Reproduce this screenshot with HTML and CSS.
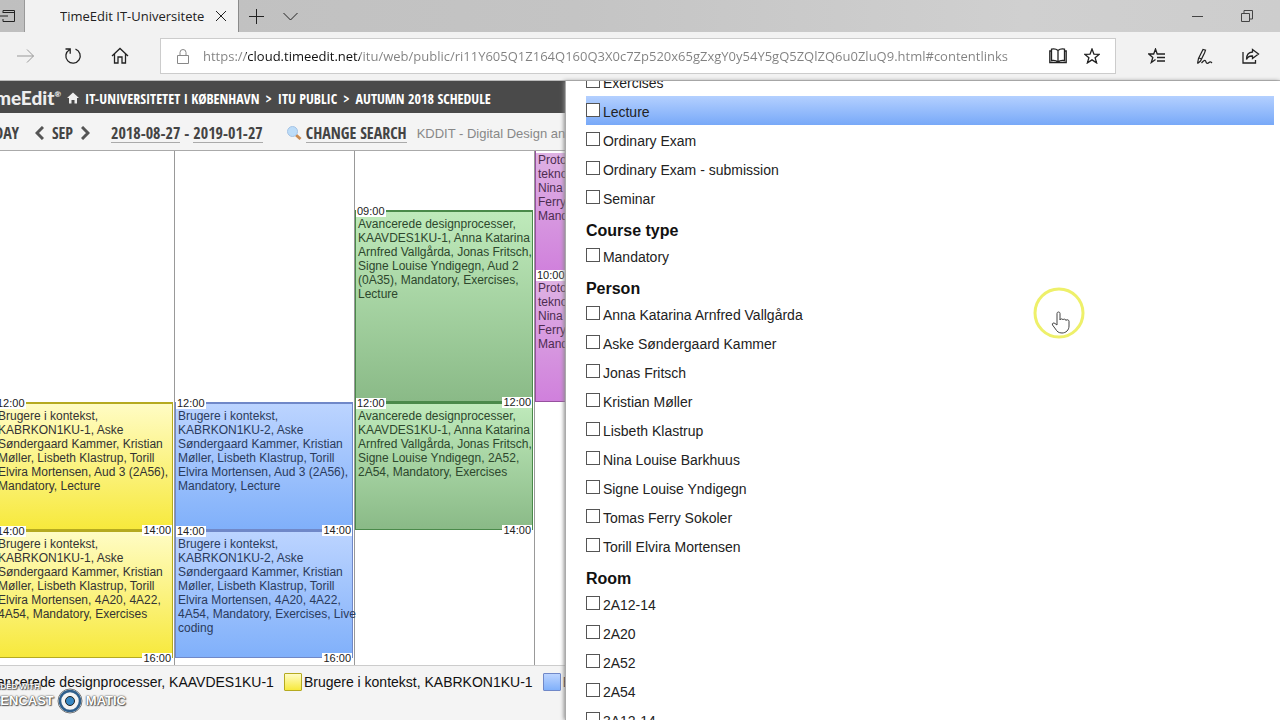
FILE: index.html
```html
<!DOCTYPE html>
<html lang="en">
<head>
<meta charset="utf-8">
<title>TimeEdit IT-Universitetet</title>
<link rel="stylesheet" href="styles.css">
</head>
<body>
<header class="tabs">
  <button class="tabs-aside" aria-label="Set tabs aside"><svg width="20" height="16" viewBox="0 0 20 16"><path d="M7 5V2.500h11.500v11H7V11M7 4.500h11.500M0 8h12M3.500 5L.5 8l3 3"/></svg></button>
  <div class="tab"><span class="tab-title">TimeEdit IT-Universitete</span><button aria-label="Close tab"><svg width="12" height="12" viewBox="0 0 12 12"><path d="M1 1l10 10M11 1L1 11"/></svg></button></div>
  <button class="tab-tool" aria-label="New tab"><svg width="15" height="15" viewBox="0 0 15 15"><path d="M7.500 0v15M0 7.500h15"/></svg></button>
  <button class="tab-tool" aria-label="Tab previews"><svg width="15" height="9" viewBox="0 0 15 9"><path d="M.5 1l7 7 7-7"/></svg></button>
  <div class="window-tools">
    <button aria-label="Minimise"><svg width="11" height="11" viewBox="0 0 11 11"><path d="M0 5.500h11"/></svg></button>
    <button aria-label="Restore"><svg width="12" height="12" viewBox="0 0 12 12"><path d="M.5 3.500h8v8h-8zM3 3V.5h8.500V9H9"/></svg></button>
  </div>
</header>
<div class="browser-bar">
  <button class="faded" aria-label="Forward"><svg width="18" height="16" viewBox="0 0 18 16"><path d="M0 8h16.500M10 1.500L16.500 8 10 14.500"/></svg></button>
  <button aria-label="Refresh"><svg width="18" height="18" viewBox="0 0 18 18"><path d="M11.500 2.200A7.200 7.200 0 1 1 5.500 2.700M1.500 2h4.700v4.700" stroke-width="1.300"/></svg></button>
  <button aria-label="Home"><svg width="18" height="18" viewBox="0 0 18 18"><path d="M1 9l8-7.500L17 9M3.500 7v9h3.500v-6h4v6h3.500V7" stroke-width="1.300"/></svg></button>
  <div class="address">
    <svg class="lock" width="12" height="15" viewBox="0 0 12 15"><path d="M.5 6.500h11v8H.5zM3 6.500V3.500a3 3 0 0 1 6 0v3"/></svg>
    <input class="url" aria-label="Address" type="text" value="https://cloud.timeedit.net/itu/web/public/ri11Y605Q1Z164Q160Q3X0c7Zp520x65gZxgY0y54Y5gQ5ZQlZQ6u0ZluQ9.html#contentlinks">
    <button aria-label="Reading view"><svg width="18" height="16" viewBox="0 0 18 16"><path d="M9 2.500C7 .8 4 .8 2.500 1.200v11.300c2.500-.4 5 0 6.500 1.500 1.500-1.500 4-1.900 6.500-1.500V1.200C14 .8 11 .8 9 2.500zM9 2.500V14M2.500 3H.8v11.500h16.400V3h-1.700" stroke-width="1.300"/></svg></button>
    <button aria-label="Favourite"><svg width="16" height="16" viewBox="0 0 16 16"><path d="M8 1l1.900 5.100 5.400.2-4.200 3.400 1.500 5.200L8 11.900l-4.600 3 1.500-5.200L.7 6.300l5.400-.2z" stroke-width="1.300"/></svg></button>
  </div>
  <button aria-label="Favourites hub"><svg width="17" height="16" viewBox="0 0 17 16"><path d="M10 6H9.200L7.500 1 5.700 6H.8l4 3.500-1.500 5L7.500 11.500M10 6h7M9 9.500h8M9 13h8" stroke-width="1.300"/></svg></button>
  <button aria-label="Make a note"><svg width="18" height="17" viewBox="0 0 18 17"><path d="M2.500 15.500l1-5L8 1.500l2.500.7L9.500 5 5.500 13l-3 2.500M4 10l2 .7M6.500 15c3-3.500 4-3 4.500-1s2 1.500 3 .5 2-.5 3 .5" stroke-width="1.200"/></svg></button>
  <button aria-label="Share"><svg width="18" height="16" viewBox="0 0 18 16"><path d="M1 4v11h12.500v-3M10.500 1.500l6 4.500-6 4.500V8C7.500 7.800 5.500 9 4.500 11.500 4.500 7 7 4.200 10.500 4z" stroke-width="1.300"/></svg></button>
</div>
<main class="page">
  <section class="schedule">
    <nav class="crumbs">
      <span class="logo">TimeEdit<sup>®</sup></span>
      <svg class="crumb-home" width="12" height="12" viewBox="0 0 12 12"><path d="M0 6l6-5.500L12 6h-2v5.500H7.500V8h-3v3.500H2V6z"/></svg>
      <a href="#itu">IT-UNIVERSITETET I KØBENHAVN</a><span>&gt;</span><a href="#public">ITU PUBLIC</a><span>&gt;</span><a href="#autumn">AUTUMN 2018 SCHEDULE</a>
    </nav>
    <div class="controls">
      <button class="today">TODAY</button>
      <button aria-label="Previous"><svg width="9" height="14" viewBox="0 0 9 14"><path d="M8 1L2 7l6 6"/></svg></button>
      <button>SEP</button>
      <button aria-label="Next"><svg width="9" height="14" viewBox="0 0 9 14"><path d="M1 1l6 6-6 6"/></svg></button>
      <span class="range"><a href="#from">2018-08-27</a> - <a href="#to">2019-01-27</a></span>
      <svg class="magnifier" width="15" height="15" viewBox="0 0 15 15"><path d="M9 9l4.500 4" stroke="#c98b52" stroke-width="3"/><circle cx="5.500" cy="5.500" r="5" fill="#bcdcf8" stroke="#a4c2e4"/></svg>
      <a class="change" href="#search">CHANGE SEARCH</a>
      <span class="query">KDDIT - Digital Design and</span>
    </div>
    <div class="calendar">
      <div class="day first">
        <article class="event yellow noon"><time class="start">12:00</time>Brugere i kontekst, KABRKON1KU-1, Aske Søndergaard Kammer, Kristian Møller, Lisbeth Klastrup, Torill Elvira Mortensen, Aud 3 (2A56), Mandatory, Lecture<time class="end">14:00</time></article>
        <article class="event yellow two"><time class="start">14:00</time>Brugere i kontekst, KABRKON1KU-1, Aske Søndergaard Kammer, Kristian Møller, Lisbeth Klastrup, Torill Elvira Mortensen, 4A20, 4A22, 4A54, Mandatory, Exercises<time class="end">16:00</time></article>
      </div>
      <div class="day">
        <article class="event blue noon"><time class="start">12:00</time>Brugere i kontekst, KABRKON1KU-2, Aske Søndergaard Kammer, Kristian Møller, Lisbeth Klastrup, Torill Elvira Mortensen, Aud 3 (2A56), Mandatory, Lecture<time class="end">14:00</time></article>
        <article class="event blue two"><time class="start">14:00</time>Brugere i kontekst, KABRKON1KU-2, Aske Søndergaard Kammer, Kristian Møller, Lisbeth Klastrup, Torill Elvira Mortensen, 4A20, 4A22, <span class="line">4A54, Mandatory, Exercises, Live</span> coding<time class="end">16:00</time></article>
      </div>
      <div class="day">
        <article class="event green nine"><time class="start">09:00</time>Avancerede designprocesser, KAAVDES1KU-1, Anna Katarina <span class="line">Arnfred Vallgårda, Jonas Fritsch,</span> Signe Louise Yndigegn, Aud 2 (0A35), Mandatory, Exercises, Lecture</article>
        <article class="event green noon"><time class="start">12:00</time>Avancerede designprocesser, KAAVDES1KU-1, Anna Katarina <span class="line">Arnfred Vallgårda, Jonas Fritsch,</span> Signe Louise Yndigegn, 2A52, 2A54, Mandatory, Exercises<time class="end upper">12:00</time><time class="end">14:00</time></article>
      </div>
      <div class="day">
        <article class="event purple eight"><time class="start">08:00</time>Proto<br>tekno<br>Nina<br>Ferry<br>Mand</article>
        <article class="event purple ten"><time class="start">10:00</time>Proto<br>tekno<br>Nina<br>Ferry<br>Mand</article>
      </div>
    </div>
    <footer class="legend">
      <span class="key"><i class="swatch green"></i>Avancerede designprocesser, KAAVDES1KU-1</span>
      <span class="key"><i class="swatch yellow"></i>Brugere i kontekst, KABRKON1KU-1</span>
      <span class="key"><i class="swatch blue"></i>Brugere i kontekst, KABRKON1KU-2</span>
    </footer>
  </section>
  <aside class="filters">
    <div class="filter-list">
      <label><input type="checkbox">Exercises</label>
      <label class="hovered"><input type="checkbox">Lecture</label>
      <label><input type="checkbox">Ordinary Exam</label>
      <label><input type="checkbox">Ordinary Exam - submission</label>
      <label><input type="checkbox">Seminar</label>
      <h2>Course type</h2>
      <label><input type="checkbox">Mandatory</label>
      <h2>Person</h2>
      <label><input type="checkbox">Anna Katarina Arnfred Vallgårda</label>
      <label><input type="checkbox">Aske Søndergaard Kammer</label>
      <label><input type="checkbox">Jonas Fritsch</label>
      <label><input type="checkbox">Kristian Møller</label>
      <label><input type="checkbox">Lisbeth Klastrup</label>
      <label><input type="checkbox">Nina Louise Barkhuus</label>
      <label><input type="checkbox">Signe Louise Yndigegn</label>
      <label><input type="checkbox">Tomas Ferry Sokoler</label>
      <label><input type="checkbox">Torill Elvira Mortensen</label>
      <h2>Room</h2>
      <label><input type="checkbox">2A12-14</label>
      <label><input type="checkbox">2A20</label>
      <label><input type="checkbox">2A52</label>
      <label><input type="checkbox">2A54</label>
      <label><input type="checkbox">3A12-14</label>
    </div>
  </aside>
</main>
<div class="watermark">
  <span class="recorded">RECORDED WITH</span>
  <span class="brand">SCREENCAST<svg width="26" height="26" viewBox="0 0 26 26"><circle cx="13" cy="13" r="12" fill="#fff" stroke="#777"/><circle cx="13" cy="13" r="10" fill="#f4f4f4" stroke="#2f5f8c" stroke-width="2.500"/><circle cx="13" cy="13" r="4.500" fill="#3687c4"/></svg>MATIC</span>
</div>
<svg class="pointer" width="52" height="52" viewBox="0 0 52 52"><circle cx="26" cy="26" r="24" fill="none" stroke="#eef06a" stroke-width="3"/><path d="M24 38V26.500c0-2 3-2 3 0V33c0-1.500 3-1.500 3 0 0-1.200 3-1.200 3 .5 0-1.200 3-1 3 .7V39c0 4-3 7-7 7-3.500 0-5-1.500-6.500-4L19.500 38c-1-2 1.500-2.500 2.500-1.500z" fill="#fff" stroke="#444"/></svg>
</body>
</html>
```
FILE: styles.css
```css
* { box-sizing: border-box; }
body {
  margin: 0;
  height: 100vh;
  overflow: hidden;
  display: flex;
  flex-direction: column;
  position: relative;
  background: #fff;
  color: #222;
  font-family: "Liberation Sans", Arial, sans-serif;
}
button {
  border: 0;
  padding: 0;
  background: none;
  color: inherit;
  font: inherit;
  display: flex;
  align-items: center;
  justify-content: center;
}
a { color: inherit; text-decoration: none; }
svg { flex: none; fill: none; stroke: #222; }

.tabs {
  flex: 0 0 32px;
  display: flex;
  background: linear-gradient(90deg, #bfbfbf, #c4c4c4 45%, #d0d0d0 80%, #cdcdcd);
}
.tabs-aside { width: 25px; padding-right: 12px; border-right: 1px solid #999; }
.tab {
  width: 214px;
  padding: 0 11px 0 35px;
  display: flex;
  align-items: center;
  justify-content: space-between;
  background: #f2f2f2;
  border-right: 1px solid #8a8a8a;
  font: 13px/32px "Open Sans", sans-serif;
}
.tab-title { width: 146px; overflow: hidden; white-space: nowrap; }
.tab-tool { width: 34px; }
.window-tools { margin-left: auto; margin-right: 9px; display: flex; }
.window-tools button { width: 49px; }
.window-tools svg { stroke: #444; }

.browser-bar {
  flex: 0 0 49px;
  display: flex;
  align-items: center;
  padding: 0 6px 0 2px;
  background: #f2f2f2;
  border-bottom: 1px solid #bbb;
}
.browser-bar > button { width: 47px; height: 40px; }
.faded svg { stroke: #999; }
.address {
  flex: 1;
  height: 36px;
  margin: 0 17px;
  padding: 0 6px 0 16px;
  display: flex;
  align-items: center;
  background: #fff;
  border: 1px solid #ccc;
}
.address button { width: 34px; height: 32px; }
.lock { stroke: #888; }
.url {
  flex: 1;
  min-width: 0;
  margin-left: 14px;
  padding: 0;
  border: 0;
  outline: 0;
  font: 13px "Open Sans", sans-serif;
  background: linear-gradient(90deg, #808080 43px, #111 43px, #111 157px, #808080 157px);
  background-clip: text;
  -webkit-background-clip: text;
  color: transparent;
}

.page { flex: 1; min-height: 0; display: grid; grid-template-columns: minmax(0, 79fr) minmax(0, 100fr); }
.schedule { min-height: 0; display: flex; flex-direction: column; overflow: hidden; background: #f4f4f4; }
.crumbs {
  flex: 0 0 32px;
  display: flex;
  align-items: center;
  gap: 6px;
  margin-left: -30px;
  padding-top: 2px;
  background: #4a4a4a;
  color: #fff;
  font: bold 14px "Open Sans Condensed", "Liberation Sans Narrow", "Roboto Condensed", sans-serif;
  white-space: nowrap;
}
.logo { width: 91px; font: 900 19px/24px Lato, sans-serif; color: #eee; text-align: right; }
.logo sup { font-size: 8px; line-height: 8px; vertical-align: 8px; }
.crumb-home { fill: #eee; stroke: none; }
.controls {
  flex: 0 0 38px;
  display: flex;
  align-items: center;
  gap: 8px;
  padding-top: 3px;
  margin-left: -22px;
  color: #444;
  border-bottom: 1px solid #aaa;
  font: bold 16px/18px "Open Sans Condensed", "Liberation Sans Narrow", "Roboto Condensed", sans-serif;
  white-space: nowrap;
}
.controls button svg { stroke: #555; stroke-width: 3; }
.controls a { display: inline-block; border-bottom: 1px solid #aaa; }
.today { margin-right: 8px; }
.range { margin: 0 16px 0 13px; }
.magnifier { stroke: none; margin-right: -4px; }
.query { margin-left: 2px; font: 13px "Liberation Sans", sans-serif; color: #888; }

.calendar { flex: 1; min-height: 0; display: flex; overflow: hidden; background: #fff; }
.day {
  flex: 0 0 180px;
  min-width: 0;
  display: grid;
  grid-template-columns: minmax(0, 1fr);
  grid-template-rows: repeat(8, 64px) 1fr;
  margin-top: -5px;
  padding-right: 1px;
  border-right: 1px solid #999;
}
.first { margin-left: -5px; }
.event {
  position: relative;
  padding: 5px 0 0 2px;
  border: 1px solid;
  border-width: 2px 1px 1px;
  font-size: 12px;
  line-height: 14px;
  color: #333;
}
.line { white-space: nowrap; }
.eight { grid-row: 1 / 3; }
.nine { grid-row: 2 / 5; }
.ten { grid-row: 3 / 5; }
.noon { grid-row: 5 / 7; }
.two { grid-row: 7 / 9; }
.yellow { background: linear-gradient(#fffcc4, #f7e93c); border-color: #b5aa20; }
.blue { background: linear-gradient(#bcd4ff, #80b0fa); border-color: #7088c8; color: #2b3b5c; }
.green { background: linear-gradient(#bfeabb, #8aba87); border-color: #4a8a4a; color: #2d472d; }
.purple { background: linear-gradient(#dfb4e4, #d080dc); border-color: #96509e; color: #4c2c50; }
time {
  position: absolute;
  z-index: 1;
  padding: 0 1px;
  background: #fff;
  color: #222;
  font-size: 11px;
  line-height: 11px;
}
.start { top: -6px; left: 0; }
.end { bottom: -7px; right: 0; }
.upper { top: -7px; bottom: auto; }

.legend {
  flex: 0 0 55px;
  display: flex;
  gap: 10px;
  margin-left: -39px;
  padding-top: 5px;
  border-top: 1px solid #ccc;
  background: #f4f4f4;
  font-size: 14px;
  color: #111;
  white-space: nowrap;
}
.key { display: flex; align-items: center; gap: 2px; height: 22px; }
.key .swatch { width: 18px; height: 18px; border-width: 1px; border-style: solid; border-radius: 1px; }

.filters {
  min-height: 0;
  overflow: hidden;
  padding: 0 6px 0 20px;
  background: #fff;
  border-left: 1px solid #aaa;
  box-shadow: -1px 0 4px #888;
  position: relative;
  z-index: 2;
}
.filter-list { margin-top: -14px; display: flex; flex-direction: column; }
.filters label, .filters h2 { height: 29px; margin: 0; }
.filters label { display: flex; align-items: center; gap: 3px; padding-top: 2px; font-size: 14px; }
.filters h2 { font-size: 16px; line-height: 38px; color: #111; }
.filters input {
  appearance: none;
  width: 14px;
  height: 14px;
  margin: 0 0 4px;
  background: #fff;
  border: 1px solid #555;
}
.hovered { background: linear-gradient(#b4d0ff, #78a9f8); }

.watermark {
  position: absolute;
  z-index: 3;
  right: calc(100% - 126px);
  bottom: 6px;
  display: flex;
  flex-direction: column;
  color: #fff;
  font-weight: bold;
  text-shadow: 0 0 1px #333, 0 0 2px #555, 1px 1px 1px #666;
  white-space: nowrap;
}
.recorded { align-self: flex-end; padding-right: 86px; font-size: 8px; line-height: 3px; }
.brand { display: flex; align-items: center; gap: 3px; font-size: 13px; line-height: 26px; }
.pointer { position: absolute; z-index: 3; left: 1033px; top: 287px; }
```
